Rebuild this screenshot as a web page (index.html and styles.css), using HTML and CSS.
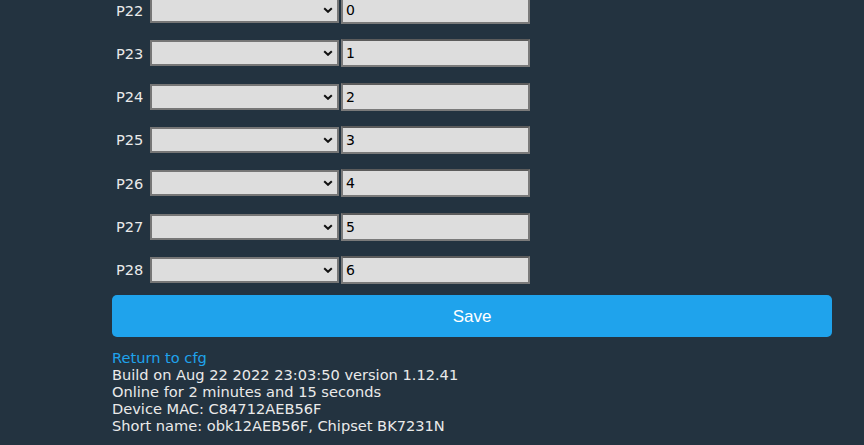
FILE: index.html
```html
<!DOCTYPE html>
<html>
<head>
<meta charset="utf-8">
<link rel="stylesheet" href="styles.css">
</head>
<body>
<div class="page">
  <form class="pins">
    <div class="row"><span class="lbl">P22</span><span class="selwrap"><select class="sel"><option></option></select><svg class="chev" viewBox="0 0 10 6" width="10" height="6"><path d="M1.2 1.2 L5 4.8 L8.8 1.2" fill="none" stroke="#111" stroke-width="2"/></svg></span><input class="val" type="text" value="0"></div>
    <div class="row"><span class="lbl">P23</span><span class="selwrap"><select class="sel"><option></option></select><svg class="chev" viewBox="0 0 10 6" width="10" height="6"><path d="M1.2 1.2 L5 4.8 L8.8 1.2" fill="none" stroke="#111" stroke-width="2"/></svg></span><input class="val" type="text" value="1"></div>
    <div class="row"><span class="lbl">P24</span><span class="selwrap"><select class="sel"><option></option></select><svg class="chev" viewBox="0 0 10 6" width="10" height="6"><path d="M1.2 1.2 L5 4.8 L8.8 1.2" fill="none" stroke="#111" stroke-width="2"/></svg></span><input class="val" type="text" value="2"></div>
    <div class="row"><span class="lbl">P25</span><span class="selwrap"><select class="sel"><option></option></select><svg class="chev" viewBox="0 0 10 6" width="10" height="6"><path d="M1.2 1.2 L5 4.8 L8.8 1.2" fill="none" stroke="#111" stroke-width="2"/></svg></span><input class="val" type="text" value="3"></div>
    <div class="row"><span class="lbl">P26</span><span class="selwrap"><select class="sel"><option></option></select><svg class="chev" viewBox="0 0 10 6" width="10" height="6"><path d="M1.2 1.2 L5 4.8 L8.8 1.2" fill="none" stroke="#111" stroke-width="2"/></svg></span><input class="val" type="text" value="4"></div>
    <div class="row"><span class="lbl">P27</span><span class="selwrap"><select class="sel"><option></option></select><svg class="chev" viewBox="0 0 10 6" width="10" height="6"><path d="M1.2 1.2 L5 4.8 L8.8 1.2" fill="none" stroke="#111" stroke-width="2"/></svg></span><input class="val" type="text" value="5"></div>
    <div class="row"><span class="lbl">P28</span><span class="selwrap"><select class="sel"><option></option></select><svg class="chev" viewBox="0 0 10 6" width="10" height="6"><path d="M1.2 1.2 L5 4.8 L8.8 1.2" fill="none" stroke="#111" stroke-width="2"/></svg></span><input class="val" type="text" value="6"></div>
    <button class="save" type="button">Save</button>
  </form>
  <div class="info">
    <a class="link" href="#">Return to cfg</a><br>
    Build on Aug 22 2022 23:03:50 version 1.12.41<br>
    Online for 2 minutes and 15 seconds<br>
    Device MAC: C84712AEB56F<br>
    Short name: obk12AEB56F, Chipset BK7231N
  </div>
</div>
</body>
</html>
```
FILE: styles.css
```css
html, body {
  margin: 0;
  padding: 0;
  background: #233340;
  height: 100%;
  overflow: hidden;
}
body {
  font-family: "DejaVu Sans", Verdana, sans-serif;
  font-size: 14.6px;
  line-height: 17px;
  color: #eaeaea;
}
.page {
  width: 720px;
  padding-left: 112px;
}
.pins {
  margin: -4px 0 0 0;
  display: flex;
  flex-direction: column;
  gap: 15.33px;
}
.row {
  display: flex;
  align-items: center;
  height: 28px;
}
.lbl {
  width: 34px;
  padding-left: 4px;
}
.selwrap {
  position: relative;
  display: block;
  width: 189px;
  height: 26px;
  margin-right: 2px;
}
.sel {
  -webkit-appearance: none;
  appearance: none;
  box-sizing: border-box;
  display: block;
  width: 189px;
  height: 26px;
  margin: 0;
  background-color: #dddddd;
  border: 2px solid #767676;
  border-radius: 0;
  color: #000;
  font-family: "DejaVu Sans", Verdana, sans-serif;
  font-size: 14px;
}
.chev {
  position: absolute;
  right: 6px;
  top: 10px;
  pointer-events: none;
}
.val {
  box-sizing: border-box;
  width: 189px;
  height: 28px;
  margin: 0;
  padding: 0 3px;
  background: #dddddd;
  border: 2px solid #7a7a7a;
  border-top-color: #5c5c5c;
  border-radius: 0;
  color: #000;
  font-family: "DejaVu Sans", Verdana, sans-serif;
  font-size: 14px;
}
.save {
  margin-top: -4.33px;
  width: 720px;
  height: 42px;
  border: 0;
  border-radius: 5px;
  background: #1fa3ec;
  color: #fff;
  font-family: "Liberation Sans", Arial, sans-serif;
  font-size: 17px;
  padding: 0 0 0 0;
  line-height: 44px;
}
.info {
  margin-top: 12px;
}
.link {
  color: #1fa3ec;
  text-decoration: none;
}
```
